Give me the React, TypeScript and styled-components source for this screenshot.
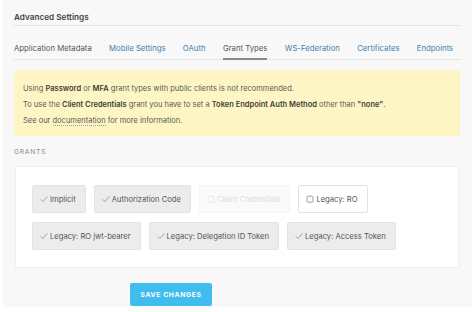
import React from "react";
import styled, { createGlobalStyle } from "styled-components";

const Global = createGlobalStyle`
  html, body { margin: 0; padding: 0; background: #ffffff; }
  body { font-family: Inter, "Liberation Sans", sans-serif; -webkit-font-smoothing: antialiased; }
`;

const Page = styled.div`
  width: 446px;
  height: 307px;
  margin-left: 3px;
  padding: 0 12px 0 11px;
  background: #f8f8f8;
  display: flex;
  flex-direction: column;
`;

const Header = styled.div`
  padding-top: 11px;
  height: 14px;
  border-bottom: 1px solid #e3e3e3;
  font-size: 8.2px;
  font-weight: 600;
  color: #444;
  line-height: 12px;
`;

const Tabs = styled.div`
  display: flex;
  gap: 17.3px;
  height: 34px;
  border-bottom: 1px solid #e3e3e3;
  box-sizing: border-box;
`;

const Tab = styled.div<{ $active?: boolean; $muted?: boolean }>`
  padding-top: 16px;
  line-height: 12px;
  font-size: 7.75px;
  color: ${(p) => (p.$active || p.$muted ? "#555" : "#3f7fb1")};
  border-bottom: 2px solid ${(p) => (p.$active ? "#8a8a8a" : "transparent")};
  margin-bottom: -1px;
  white-space: nowrap;
`;

const Notice = styled.div`
  margin-top: 10px;
  background: #fdf6c4;
  padding: 11px 9px 7px;
  font-size: 7.5px;
  line-height: 16px;
  color: #5a5a50;
`;

const B = styled.b`
  font-weight: 600;
  color: #3d3d36;
`;

const DocLink = styled.span`
  border-bottom: 1px dotted #999;
  color: #5a5a50;
`;

const Label = styled.div`
  margin-top: 11px;
  line-height: 10px;
  font-size: 6.6px;
  letter-spacing: 0.8px;
  color: #999;
  font-weight: 500;
`;

const Panel = styled.div`
  margin: 9px 1px 0 1px;
  background: #ffffff;
  border: 1px solid #f0f0f0;
  padding: 18px 16px 17px;
  display: flex;
  flex-wrap: wrap;
  gap: 9px 8px;
`;

const Grant = styled.div<{ $state: "on" | "off" | "disabled" }>`
  height: 28px;
  box-sizing: border-box;
  padding: 0 9px 0 7px;
  display: flex;
  align-items: center;
  gap: 2px;
  border-radius: 2px;
  font-size: 7.6px;
  white-space: nowrap;
  background: ${(p) => (p.$state === "on" ? "#ececec" : p.$state === "off" ? "#ffffff" : "#fafafa")};
  border: 1px solid ${(p) => (p.$state === "on" ? "#e3e3e3" : p.$state === "off" ? "#e2e2e2" : "#f6f6f6")};
  color: ${(p) => (p.$state === "disabled" ? "#dcdcdc" : "#555")};
`;

const Footer = styled.div`
  padding: 13px 0 0 116px;
`;

const Save = styled.button`
  width: 82px;
  height: 23px;
  border: none;
  border-radius: 2px;
  background: #3fbdef;
  color: #fff;
  font-family: inherit;
  font-weight: 700;
  font-size: 6.8px;
  letter-spacing: 0.6px;
  padding: 0;
`;

const Check = () => (
  <svg width="8" height="8" viewBox="0 0 8 8" fill="none">
    <path d="M0.8 4.4 L2.9 6.6 L7.4 1.4" stroke="#8c8c8c" strokeWidth="0.75" />
  </svg>
);

const Box = ({ color = "#888" }: { color?: string }) => (
  <svg width="8" height="8" viewBox="0 0 8 8" fill="none">
    <rect x="1" y="1.2" width="6" height="6" rx="1" stroke={color} strokeWidth="0.8" />
  </svg>
);

const grants: { label: string; state: "on" | "off" | "disabled" }[] = [
  { label: "Implicit", state: "on" },
  { label: "Authorization Code", state: "on" },
  { label: "Client Credentials", state: "disabled" },
  { label: "Legacy: RO", state: "off" },
  { label: "Legacy: RO jwt-bearer", state: "on" },
  { label: "Legacy: Delegation ID Token", state: "on" },
  { label: "Legacy: Access Token", state: "on" },
];

const tabs = [
  { label: "Application Metadata", muted: true },
  { label: "Mobile Settings" },
  { label: "OAuth" },
  { label: "Grant Types", active: true },
  { label: "WS-Federation" },
  { label: "Certificates" },
  { label: "Endpoints" },
];

export default function App() {
  return (
    <>
      <Global />
      <Page>
        <Header>Advanced Settings</Header>
        <Tabs>
          {tabs.map((t) => (
            <Tab key={t.label} $active={t.active} $muted={t.muted}>
              {t.label}
            </Tab>
          ))}
        </Tabs>
        <Notice>
          <div>
            Using <B>Password</B> or <B>MFA</B> grant types with public clients is not recommended.
          </div>
          <div>
            To use the <B>Client Credentials</B> grant you have to set a <B>Token Endpoint Auth Method</B> other than{" "}
            <B>"none"</B>.
          </div>
          <div>
            See our <DocLink>documentation</DocLink> for more information.
          </div>
        </Notice>
        <Label>GRANTS</Label>
        <Panel>
          {grants.map((g) => (
            <Grant key={g.label} $state={g.state}>
              {g.state === "on" ? <Check /> : <Box color={g.state === "disabled" ? "#e4e4e4" : "#888"} />}
              {g.label}
            </Grant>
          ))}
        </Panel>
        <Footer>
          <Save>SAVE CHANGES</Save>
        </Footer>
      </Page>
    </>
  );
}
